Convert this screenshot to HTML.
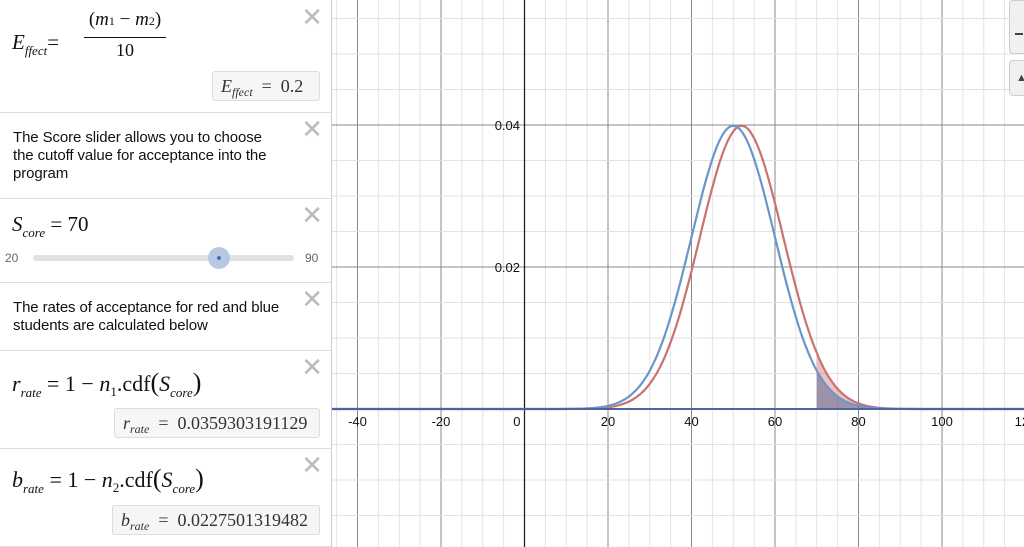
<!DOCTYPE html>
<html><head><style>
body{margin:0;width:1024px;height:547px;overflow:hidden;background:#fff;font-family:"Liberation Sans",sans-serif;position:relative}
#panel{position:absolute;left:0;top:0;width:331px;height:547px;background:#fff;border-right:1px solid #ccc;z-index:2}
.row{position:absolute;left:0;width:331px;border-bottom:1px solid #ddd}
.x{position:absolute;right:8px;top:6px;font-size:26px;color:#bbb;font-family:"Liberation Sans",sans-serif;line-height:22px}
.m{font-family:"Liberation Serif",serif;font-size:20px;color:#111;position:absolute}
.i{font-style:italic}
.sub{font-size:13px;font-style:italic;position:relative;top:6px}
.txt{position:absolute;left:13px;font-size:15px;line-height:18px;color:#111;letter-spacing:-0.1px}
.res{position:absolute;right:11px;height:30px;background:#f6f6f6;border:1px solid #ddd;border-radius:3px;font-family:"Liberation Serif",serif;font-size:18px;color:#333;line-height:28px;padding:0 8px;box-sizing:border-box}
svg{position:absolute;left:0;top:0}
</style></head><body>
<svg id="g" width="1024" height="547"></svg>
<div style="position:absolute;left:1009px;top:0;width:20px;height:52px;background:#f0f0f0;border:1px solid #ccc;border-radius:4px 0 0 4px;z-index:3"><div style="position:absolute;left:5px;top:32px;width:8px;height:2px;background:#444"></div></div>
<div style="position:absolute;left:1009px;top:60px;width:20px;height:34px;background:#f0f0f0;border:1px solid #ccc;border-radius:4px 0 0 4px;z-index:3"><div style="position:absolute;left:6px;top:11px;font-size:11px;color:#444">&#9650;</div></div>
<div id="panel">
 <div class="row" style="top:0;height:112px">
  <div class="m" style="left:12px;top:30px;font-size:21px"><span class="i">E</span><span class="sub">ffect</span>=</div>
  <div class="m" style="left:84px;top:9px;width:82px;text-align:center;font-size:19px">(<span class="i">m</span><span style="font-size:12px">1</span> − <span class="i">m</span><span style="font-size:12px">2</span>)</div>
  <div style="position:absolute;left:84px;top:37px;width:82px;border-top:1px solid #111"></div>
  <div class="m" style="left:84px;top:40px;width:82px;text-align:center;font-size:18px">10</div>
  <div class="res" style="top:71px;width:108px"><span class="i">E</span><span style="font-size:12px;font-style:italic;position:relative;top:4px">ffect</span> &nbsp;= &nbsp;0.2</div>
  <div class="x">✕</div>
 </div>
 <div class="row" style="top:112px;height:86px">
  <div class="txt" style="top:17px">The Score slider allows you to choose<br>the cutoff value for acceptance into the<br>program</div>
  <div class="x">✕</div>
 </div>
 <div class="row" style="top:198px;height:84px">
  <div class="m" style="left:12px;top:14px;font-size:21px"><span class="i">S</span><span class="sub">core</span> = <span>70</span></div>
  <div style="position:absolute;left:5px;top:53px;font-size:12px;color:#666">20</div>
  <div style="position:absolute;left:305px;top:53px;font-size:12px;color:#666">90</div>
  <div style="position:absolute;left:33px;top:57px;width:261px;height:6px;background:#e2e2e2;border-radius:3px"></div>
  <div style="position:absolute;left:208px;top:49px;width:22px;height:22px;border-radius:50%;background:#b9c8e2"></div>
  <div style="position:absolute;left:217px;top:58px;width:4px;height:4px;border-radius:50%;background:#4a6fb0"></div>
  <div class="x">✕</div>
 </div>
 <div class="row" style="top:282px;height:68px">
  <div class="txt" style="top:17px">The rates of acceptance for red and blue<br>students are calculated below</div>
  <div class="x">✕</div>
 </div>
 <div class="row" style="top:350px;height:98px">
  <div class="m" style="left:12px;top:18px;font-size:22px"><span class="i">r</span><span class="sub">rate</span> = 1 − <span class="i">n</span><span style="font-size:13px;position:relative;top:5px">1</span>.cdf<span style="font-size:26px">(</span><span class="i">S</span><span class="sub">core</span><span style="font-size:26px">)</span></div>
  <div class="res" style="top:58px;width:206px"><span class="i">r</span><span style="font-size:12px;font-style:italic;position:relative;top:4px">rate</span> &nbsp;= &nbsp;0.0359303191129</div>
  <div class="x">✕</div>
 </div>
 <div class="row" style="top:448px;height:98px">
  <div class="m" style="left:12px;top:16px;font-size:22px"><span class="i">b</span><span class="sub">rate</span> = 1 − <span class="i">n</span><span style="font-size:13px;position:relative;top:5px">2</span>.cdf<span style="font-size:26px">(</span><span class="i">S</span><span class="sub">core</span><span style="font-size:26px">)</span></div>
  <div class="res" style="top:57px;width:208px"><span class="i">b</span><span style="font-size:12px;font-style:italic;position:relative;top:4px">rate</span> &nbsp;= &nbsp;0.0227501319482</div>
  <div class="x">✕</div>
 </div>
</div>
<script>
var ox=524.5,oy=409,sx=4.175,sy=7100,s='';
function X(v){return ox+v*sx}function Y(v){return oy-v*sy}
for(var v=-85;v<=125;v+=5){var p=X(v),maj=(v%20==0);s+='<line x1="'+p+'" y1="0" x2="'+p+'" y2="547" stroke="'+(maj?'#888':'#e2e2e2')+'" stroke-width="1"/>'}
for(var k=-12;k<=12;k++){var v=k*0.005,p=Y(v),maj=(k%4==0);s+='<line x1="330" y1="'+p+'" x2="1024" y2="'+p+'" stroke="'+(maj?'#888':'#e2e2e2')+'"/>'}
s+='<line x1="'+ox+'" y1="0" x2="'+ox+'" y2="547" stroke="#222" stroke-width="1.3"/>';
s+='<line x1="330" y1="'+oy+'" x2="1024" y2="'+oy+'" stroke="#222" stroke-width="1.3"/>';
function f(x,m){return Math.exp(-Math.pow((x-m)/10,2)/2)/(10*Math.sqrt(2*Math.PI))}
function path(m){var d='';for(var x=-50;x<=125;x+=0.5){d+=(d?'L':'M')+X(x).toFixed(1)+' '+Y(f(x,m)).toFixed(1)}return d}
function area(m){var d='M'+X(70)+' '+oy;for(var x=70;x<=125;x+=0.5)d+='L'+X(x).toFixed(1)+' '+Y(f(x,m)).toFixed(1);return d+'L'+X(125)+' '+oy+'Z'}
s+='<path d="'+area(52)+'" fill="#c0504d" fill-opacity="0.35"/>';
s+='<path d="'+area(50)+'" fill="#2d4a8a" fill-opacity="0.4"/>';
s+='<path d="'+path(52)+'" fill="none" stroke="#c9726e" stroke-width="2.2"/>';
s+='<path d="'+path(50)+'" fill="none" stroke="#6b96c8" stroke-width="2.2"/>';
s+='<line x1="330" y1="'+oy+'" x2="1024" y2="'+oy+'" stroke="#4f63a0" stroke-width="2"/>';
var lb=[-40,-20,0,20,40,60,80,100,120];
lb.forEach(function(v){var t=(v==0?ox-4:X(v));s+='<text x="'+t+'" y="426" font-family="Liberation Sans" font-size="13" fill="#111" text-anchor="'+(v==0?'end':'middle')+'">'+v+'</text>'});
s+='<text x="520" y="130" font-family="Liberation Sans" font-size="13" fill="#111" text-anchor="end">0.04</text>';
s+='<text x="520" y="272" font-family="Liberation Sans" font-size="13" fill="#111" text-anchor="end">0.02</text>';
document.getElementById('g').innerHTML=s;
</script>
</body></html>
